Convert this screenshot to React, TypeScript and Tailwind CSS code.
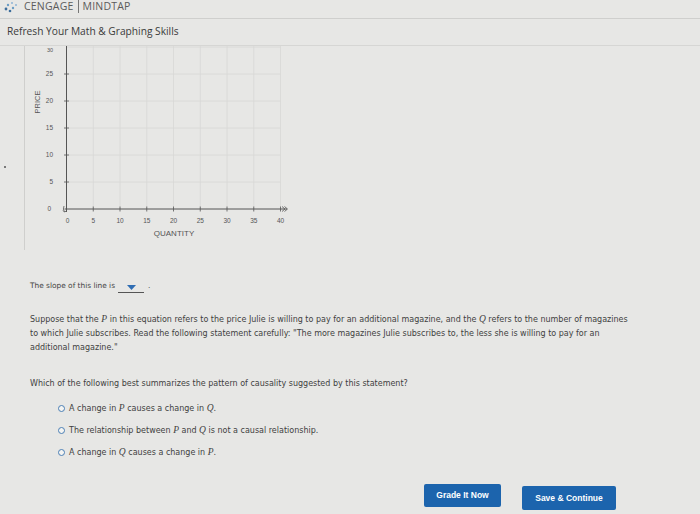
import React from "react";

const xs = [0, 5, 10, 15, 20, 25, 30, 35, 40];
const ys = [0, 5, 10, 15, 20, 25];

// value -> page coordinate (svg viewBox uses page coords)
const px = (v: number) => 65.5 + v * 5.35;
const py = (v: number) => 209 - v * 5.4;

function Var({ children }: { children: React.ReactNode }) {
  return (
    <span className="italic text-[9.5px]" style={{ fontFamily: '"Liberation Serif", serif' }}>
      {children}
    </span>
  );
}

function Graph() {
  return (
    <svg width={276} height={204} viewBox="24 46 276 204" className="block">
      {/* grid */}
      {xs.slice(1).map((v) => (
        <line key={"gx" + v} x1={px(v)} y1={46} x2={px(v)} y2={py(0)} stroke="#d8d8d6" strokeWidth={0.8} />
      ))}
      {ys.slice(1).map((v) => (
        <line key={"gy" + v} x1={px(0)} y1={py(v)} x2={px(40)} y2={py(v)} stroke="#d8d8d6" strokeWidth={0.8} />
      ))}
      <line x1={px(0)} y1={py(30)} x2={px(40)} y2={py(30)} stroke="#d8d8d6" strokeWidth={0.8} />

      {/* axes */}
      <line x1={px(0)} y1={46} x2={px(0)} y2={py(0) + 3} stroke="#555" strokeWidth={1} />
      <line x1={px(0) - 2} y1={py(0)} x2={286} y2={py(0)} stroke="#555" strokeWidth={1} />
      <path d="M281 206.5 L284 209 L281 211.5 M283.5 206.5 L286.5 209 L283.5 211.5" stroke="#555" strokeWidth={0.8} fill="none" />
      <path d="M63 206 Q61.5 209 63.5 212 M63.5 212 L62 210.5 M63.5 212 L65.5 211" stroke="#555" strokeWidth={0.8} fill="none" />

      {/* ticks */}
      {xs.slice(1).map((v) => (
        <line key={"tx" + v} x1={px(v)} y1={py(0) - 2.5} x2={px(v)} y2={py(0) + 2.5} stroke="#555" strokeWidth={0.8} />
      ))}
      {ys.slice(1).map((v) => (
        <line key={"ty" + v} x1={px(0) - 2.5} y1={py(v)} x2={px(0) + 2.5} y2={py(v)} stroke="#555" strokeWidth={0.8} />
      ))}

      {/* labels */}
      <g fontFamily='"Liberation Sans", Arial, sans-serif' fontSize={6.5} fill="#555">
        {xs.map((v) => (
          <text key={"lx" + v} x={px(v) + (v === 0 ? 1 : 0)} y={py(0) + 14} textAnchor="middle">
            {v}
          </text>
        ))}
        {ys.map((v) => (
          <text key={"ly" + v} x={v === 0 ? 50 : 52} y={py(v) + 2.2} textAnchor="end">
            {v}
          </text>
        ))}
        <text x={52} y={51.5} textAnchor="end" fontSize={5.5}>30</text>
        <text x={173} y={236} textAnchor="middle" fontSize={8}>QUANTITY</text>
        <text x={0} y={0} textAnchor="middle" fontSize={7.5} transform="translate(38.5 102) rotate(-90)">
          PRICE
        </text>
      </g>
    </svg>
  );
}

function Radio({ children }: { children: React.ReactNode }) {
  return (
    <div className="flex items-center gap-[4px] h-[10px]">
      <span className="w-[7px] h-[7px] rounded-full border border-[#4a7fb5] bg-[#f4f4f2]" />
      <span>{children}</span>
    </div>
  );
}

export default function App() {
  return (
    <div
      className="w-[700px] h-[514px] overflow-hidden flex flex-col bg-[#e7e7e5] text-[#3f3f3f]"
      style={{ fontFamily: '"DejaVu Sans", Verdana, sans-serif' }}
    >
      {/* top bar */}
      <div className="h-[19px] border-b border-[#cfcfcd] flex items-start pl-[2px]">
        <div className="flex items-center gap-[4px] -mt-[1px]" style={{ fontFamily: '"Open Sans", sans-serif' }}>
          <svg width={18} height={14} viewBox="0 0 18 14">
            <circle cx={4} cy={10} r={1.4} fill="#3d6e9c" />
            <circle cx={8} cy={12} r={1.3} fill="#3d6e9c" />
            <circle cx={6} cy={6} r={1.2} fill="#6a9cc4" />
            <circle cx={11} cy={9} r={1.2} fill="#6a9cc4" />
            <circle cx={10} cy={4} r={1} fill="#8fb5d4" />
            <circle cx={14} cy={6} r={1} fill="#8fb5d4" />
          </svg>
          <span className="text-[10.5px] leading-[13px] tracking-[0.2px] text-[#5b5b5b]">CENGAGE</span>
          <span className="w-px h-[13px] bg-[#777]" />
          <span className="text-[10.5px] leading-[13px] tracking-[0.2px] text-[#5b5b5b]">MINDTAP</span>
        </div>
      </div>

      {/* title */}
      <div className="h-[27px] border-b border-[#d6d6d4] flex items-center pl-[7px]">
        <span className="text-[10.2px] text-[#3a3a3a]" style={{ fontFamily: '"Open Sans", sans-serif' }}>
          Refresh Your Math &amp; Graphing Skills
        </span>
      </div>

      {/* graph */}
      <div className="flex h-[204px]">
        <div className="w-[24px] pt-[120px] pl-[4px]">
          <span className="block w-[2px] h-[2px] rounded-full bg-[#555]" />
        </div>
        <div className="border-l border-[#cfcfcd]">
          <Graph />
        </div>
      </div>

      {/* question text */}
      <div className="pl-[30px] text-[8px] leading-[14px]">
        <div className="mt-[29px] flex items-end text-[7.4px]">
          <span>The slope of this line is</span>
          <span className="ml-[3px] w-[26px] h-[10px] border-b border-[#555] flex items-center justify-center">
            <svg width={9} height={5} viewBox="0 0 9 5">
              <path d="M0 0 L9 0 L4.5 5 Z" fill="#2f6db3" />
            </svg>
          </span>
          <span className="ml-[4px]">.</span>
        </div>

        <div className="mt-[19px] whitespace-nowrap">
          Suppose that the <Var>P</Var> in this equation refers to the price Julie is willing to pay for an additional magazine, and the{" "}
          <Var>Q</Var> refers to the number of magazines
          <br />
          to which Julie subscribes. Read the following statement carefully: "The more magazines Julie subscribes to, the less she is willing to pay for an
          <br />
          additional magazine."
        </div>

        <div className="mt-[22px] whitespace-nowrap">
          Which of the following best summarizes the pattern of causality suggested by this statement?
        </div>

        <div className="mt-[12px] ml-[28px] flex flex-col gap-[12px] whitespace-nowrap">
          <Radio>
            A change in <Var>P</Var> causes a change in <Var>Q</Var>.
          </Radio>
          <Radio>
            The relationship between <Var>P</Var> and <Var>Q</Var> is not a causal relationship.
          </Radio>
          <Radio>
            A change in <Var>Q</Var> causes a change in <Var>P</Var>.
          </Radio>
        </div>
      </div>

      {/* buttons */}
      <div className="mt-auto mb-[4px] flex items-start pl-[424px] gap-[21px]" style={{ fontFamily: '"Liberation Sans", Arial, sans-serif' }}>
        <button className="w-[77px] h-[23px] rounded-[2px] bg-[#1c64ad] text-white text-[8.5px] font-bold">
          Grade It Now
        </button>
        <button className="mt-[2px] w-[94px] h-[24px] rounded-[2px] bg-[#1c64ad] text-white text-[8.5px] font-bold">
          Save &amp; Continue
        </button>
      </div>
    </div>
  );
}
